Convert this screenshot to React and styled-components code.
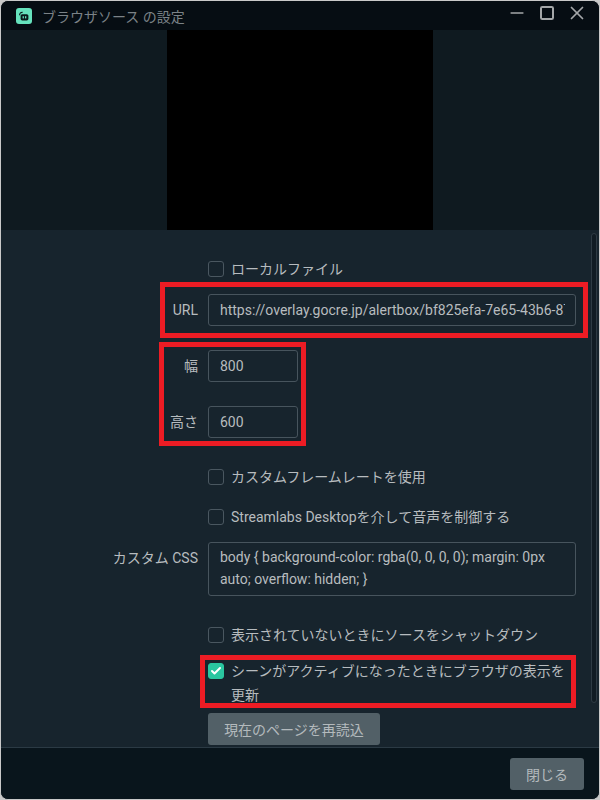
import React from "react";
import styled, { createGlobalStyle } from "styled-components";
import { Minus, Square, X, Check } from "lucide-react";

const GlobalStyle = createGlobalStyle`
  html, body {
    margin: 0;
    padding: 0;
    background: #c9c9c9;
  }
  * {
    box-sizing: border-box;
  }
`;

function StreamlabsLogo() {
  return (
    <LogoMark viewBox="0 0 16 16">
      <rect width="16" height="16" rx="3" fill="#66e2bd" />
      <path d="M3.6 7.2 C3.6 5 5 4.2 6.6 4.4" stroke="#0a1a1c" strokeWidth="1.2" fill="none" />
      <rect x="4.6" y="6.2" width="7.8" height="6.2" rx="1.6" fill="#0a1a1c" />
      <rect x="6.6" y="8.2" width="1.3" height="2.2" fill="#66e2bd" />
      <rect x="9" y="8.2" width="1.3" height="2.2" fill="#66e2bd" />
    </LogoMark>
  );
}

function CheckRow({ label, checked, top, children }) {
  return (
    <Row $top={top}>
      <LabelCell />
      <CheckLabel>
        <CheckBox $checked={checked}>
          {checked && <Check size={12} strokeWidth={4} color="#fff" />}
        </CheckBox>
        <span>{label}</span>
      </CheckLabel>
      {children}
    </Row>
  );
}

function App() {
  return (
    <>
      <GlobalStyle />
      <Win>
        <TitleBar>
          <StreamlabsLogo />
          <Title>ブラウザソース の設定</Title>
          <WinButtons>
            <WinButton><Minus size={20} strokeWidth={2} /></WinButton>
            <WinButton><Square size={16} strokeWidth={3} /></WinButton>
            <WinButton><X size={22} strokeWidth={1.9} /></WinButton>
          </WinButtons>
        </TitleBar>

        <Preview>
          <PreviewCanvas />
        </Preview>

        <Form>
          <FormColumn>
            <CheckRow label="ローカルファイル" />

            <Row $top={17}>
              <LabelCell>URL</LabelCell>
              <TextInput readOnly value="https://overlay.gocre.jp/alertbox/bf825efa-7e65-43b6-87" />
              <Highlight $t={-12} $l={159} $r={11} $b={-12} />
            </Row>

            <SizeGroup>
              <Row>
                <LabelCell>幅</LabelCell>
                <TextInput $small readOnly value="800" />
              </Row>
              <Row $top={24}>
                <LabelCell>高さ</LabelCell>
                <TextInput $small readOnly value="600" />
              </Row>
              <Highlight $t={-8} $l={158} $r={-8} $b={-8} />
            </SizeGroup>

            <CheckRow top={31} label="カスタムフレームレートを使用" />
            <CheckRow top={24} label="Streamlabs Desktopを介して音声を制御する" />

            <Row $top={17}>
              <LabelCell>カスタム CSS</LabelCell>
              <TextArea>
                {"body { background-color: rgba(0, 0, 0, 0); margin: 0px auto; overflow: hidden; }"}
              </TextArea>
            </Row>

            <CheckRow top={31} label="表示されていないときにソースをシャットダウン" />
            <CheckRow top={20} checked label="シーンがアクティブになったときにブラウザの表示を更新">
              <Highlight $t={-8} $l={199} $r={23} $b={-5} />
            </CheckRow>

            <Row $top={10}>
              <LabelCell />
              <Button $wide>現在のページを再読込</Button>
            </Row>
          </FormColumn>
          <ScrollThumb />
        </Form>

        <Footer>
          <Button>閉じる</Button>
        </Footer>
      </Win>
    </>
  );
}

const Win = styled.div`
  position: relative;
  width: 600px;
  height: 800px;
  display: flex;
  flex-direction: column;
  overflow: hidden;
  border: 1px solid #c9c9c9;
  border-radius: 8px;
  background: #17242d;
  color: #b7bcbf;
  font-family: Roboto, "Noto Sans CJK JP", sans-serif;
  font-size: 14px;
`;

const TitleBar = styled.div`
  height: 29px;
  flex: none;
  display: flex;
  align-items: center;
  padding: 0 7px 0 15px;
  background: #060d13;
`;

const LogoMark = styled.svg`
  width: 16px;
  height: 16px;
  flex: none;
`;

const Title = styled.div`
  margin-left: 10px;
  color: #7b8287;
`;

const WinButtons = styled.div`
  margin-left: auto;
  margin-top: -5px;
  display: flex;
  align-items: center;
  color: #a4a7a9;
`;

const WinButton = styled.span`
  width: 30px;
  height: 22px;
  display: flex;
  align-items: center;
  justify-content: center;
`;

const Preview = styled.div`
  height: 200px;
  flex: none;
  display: flex;
  justify-content: center;
  background: #0f1a20;
`;

const PreviewCanvas = styled.div`
  width: 266px;
  background: #000;
`;

const Form = styled.div`
  position: relative;
  flex: 1;
  min-height: 0;
  overflow: hidden;
  padding-top: 31px;
  background: #17242d;
`;

const FormColumn = styled.div`
  display: flex;
  flex-direction: column;
`;

const Row = styled.div`
  position: relative;
  display: flex;
  align-items: flex-start;
  margin-top: ${(p) => p.$top || 0}px;
  padding-right: 22px;
`;

const SizeGroup = styled.div`
  position: relative;
  width: 297px;
  margin-top: 24px;
`;

const LabelCell = styled.div`
  width: 197px;
  flex: none;
  margin-right: 10px;
  line-height: 32px;
  text-align: right;
`;

const CheckLabel = styled.label`
  display: flex;
  align-items: flex-start;
  gap: 7px;
  line-height: 24px;
  margin: -4px 0;
`;

const CheckBox = styled.span`
  width: 16px;
  height: 16px;
  flex: none;
  margin-top: 4px;
  display: flex;
  align-items: center;
  justify-content: center;
  border-radius: 3px;
  border: 1px solid ${(p) => (p.$checked ? "#2ac6a0" : "#4a5760")};
  background: ${(p) => (p.$checked ? "#2ac6a0" : "transparent")};
`;

const TextInput = styled.input`
  width: ${(p) => (p.$small ? "90px" : "368px")};
  height: 32px;
  flex: none;
  padding: 0 10px 0 11px;
  border: 1px solid #47545d;
  border-radius: 3px;
  outline: none;
  background: #17242d;
  color: #b7bcbf;
  font: inherit;
`;

const TextArea = styled.div`
  width: 368px;
  height: 54px;
  flex: none;
  padding: 3px 10px 0 11px;
  border: 1px solid #47545d;
  border-radius: 3px;
  line-height: 22px;
`;

const Button = styled.button`
  width: ${(p) => (p.$wide ? "172px" : "74px")};
  height: 32px;
  flex: none;
  padding: 0;
  border: 0;
  border-radius: 3px;
  background: #526067;
  color: #b4babd;
  font: inherit;
`;

const Footer = styled.div`
  height: 52px;
  flex: none;
  display: flex;
  justify-content: flex-end;
  align-items: center;
  padding: 1px 15px 0 0;
  border-top: 1px solid #2b3a44;
  background: #09151c;
`;

const ScrollThumb = styled.div`
  position: absolute;
  top: 3px;
  right: 2px;
  width: 6px;
  height: 470px;
  border: 1px solid #2e3b44;
  border-radius: 3px;
  background: #111c24;
`;

const Highlight = styled.div`
  position: absolute;
  top: ${(p) => p.$t}px;
  left: ${(p) => p.$l}px;
  right: ${(p) => p.$r}px;
  bottom: ${(p) => p.$b}px;
  border: 5px solid #ed1c24;
  pointer-events: none;
`;

export default App;
